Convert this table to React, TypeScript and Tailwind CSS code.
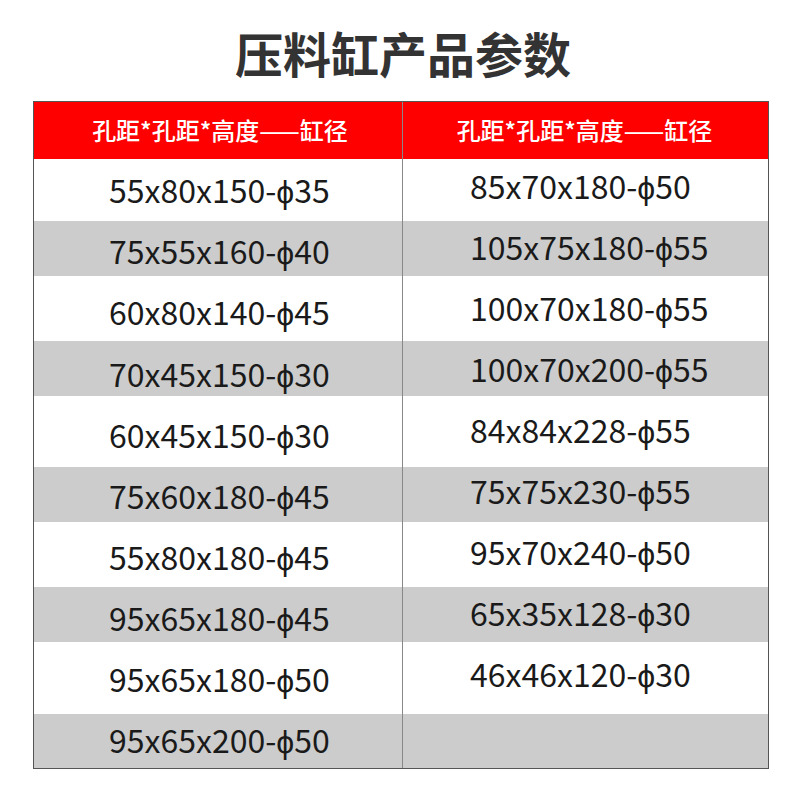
const rows = [
  { h: "h-[62px]", lp: "pt-[14px]", rp: "pt-[10px]", bg: "bg-white", l: "55x80x150-ϕ35", r: "85x70x180-ϕ50" },
  { h: "h-[55px]", lp: "pt-[13px]", rp: "pt-[9px]", bg: "bg-[#cccccc]", l: "75x55x160-ϕ40", r: "105x75x180-ϕ55" },
  { h: "h-[65px]", lp: "pt-[19px]", rp: "pt-[15px]", bg: "bg-white", l: "60x80x140-ϕ45", r: "100x70x180-ϕ55" },
  { h: "h-[55px]", lp: "pt-[16px]", rp: "pt-[11px]", bg: "bg-[#cccccc]", l: "70x45x150-ϕ30", r: "100x70x200-ϕ55" },
  { h: "h-[71px]", lp: "pt-[22px]", rp: "pt-[17px]", bg: "bg-white", l: "60x45x150-ϕ30", r: "84x84x228-ϕ55" },
  { h: "h-[55px]", lp: "pt-[12px]", rp: "pt-[7px]", bg: "bg-[#cccccc]", l: "75x60x180-ϕ45", r: "75x75x230-ϕ55" },
  { h: "h-[65px]", lp: "pt-[18px]", rp: "pt-[13px]", bg: "bg-white", l: "55x80x180-ϕ45", r: "95x70x240-ϕ50" },
  { h: "h-[55px]", lp: "pt-[14px]", rp: "pt-[9px]", bg: "bg-[#cccccc]", l: "95x65x180-ϕ45", r: "65x35x128-ϕ30" },
  { h: "h-[72px]", lp: "pt-[20px]", rp: "pt-[15px]", bg: "bg-white", l: "95x65x180-ϕ50", r: "46x46x120-ϕ30" },
  { h: "h-[54px]", lp: "pt-[9px]", rp: "pt-[9px]", bg: "bg-[#cccccc]", l: "95x65x200-ϕ50", r: "" },
];

const heading = "孔距*孔距*高度——缸径";

export default function App() {
  return (
    <div className="h-[800px] w-[800px] bg-white font-['Noto_Sans_CJK_SC',sans-serif]">
      <h1 className="pl-[6px] pt-[28px] text-center text-[48px] font-bold leading-[48px] text-[#333333]">
        压料缸产品参数
      </h1>

      <div className="ml-[33px] mt-[25px] w-[736px] border-x border-b border-t border-[#555555]">
        {/* header */}
        <div className="flex h-[57px] bg-[#ff0000] text-[24px] font-medium leading-none text-white">
          <div className="flex w-[369px] items-center justify-center border-r border-[#888888] pb-[2px] pl-[4px]">
            {heading}
          </div>
          <div className="flex flex-1 items-center justify-center pb-[2px] pr-[2px]">
            {heading}
          </div>
        </div>

        {rows.map((row, i) => (
          <div key={i} className={`flex ${row.h} ${row.bg}`}>
            <div
              className={`w-[369px] border-r border-[#888888] pl-[75px] text-[32px] leading-[32px] text-[#1a1a1a] ${row.lp}`}
            >
              {row.l}
            </div>
            <div
              className={`flex-1 pl-[67px] text-[32px] leading-[32px] text-[#1a1a1a] ${row.rp}`}
            >
              {row.r}
            </div>
          </div>
        ))}
      </div>
    </div>
  );
}
